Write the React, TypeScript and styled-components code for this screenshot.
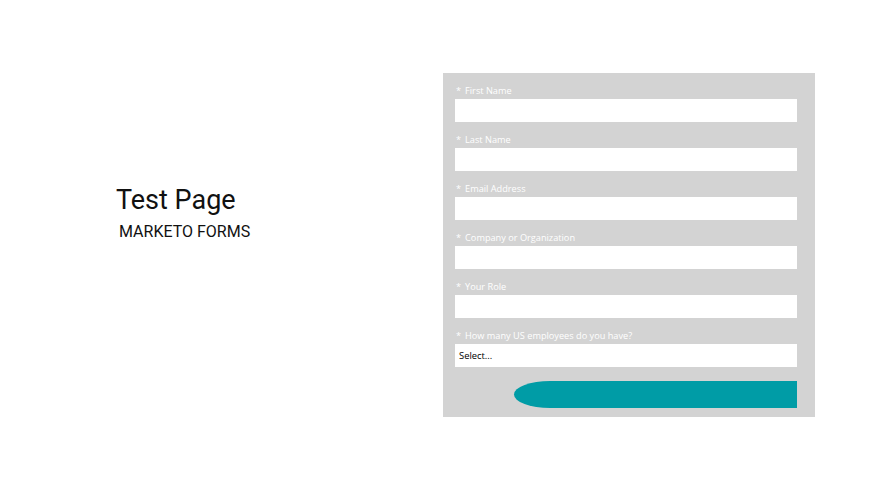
import React from "react";
import styled, { createGlobalStyle } from "styled-components";

const Global = createGlobalStyle`
  html, body { margin: 0; padding: 0; background: #ffffff; }
  body { font-family: Roboto, "Liberation Sans", Arial, sans-serif; }
  * { box-sizing: border-box; }
`;

const Page = styled.div`
  display: flex;
  align-items: center;
  height: 489px;
  width: 870px;
`;

const Intro = styled.div`
  flex: 1;
  display: flex;
  flex-direction: column;
  padding-left: 116px;
  padding-bottom: 63px;
`;

const Title = styled.h1`
  margin: 0;
  font-family: Roboto, "Liberation Sans", sans-serif;
  font-weight: 400;
  font-size: 27px;
  line-height: 30px;
  color: #111;
`;

const Subtitle = styled.div`
  margin: 8px 0 0 3px;
  font-family: Roboto, "Liberation Sans", sans-serif;
  font-size: 16px;
  line-height: 18px;
  color: #111;
`;

const Form = styled.form`
  width: 372px;
  margin-right: 55px;
  background: #d3d3d3;
  padding: 0 18px 9px 12px;
  display: flex;
  flex-direction: column;
`;

const Field = styled.div`
  display: flex;
  flex-direction: column;
`;

const Label = styled.label`
  display: block;
  padding-top: 12px;
  height: 26px;
  font-family: "Open Sans", "Liberation Sans", sans-serif;
  font-size: 9.2px;
  line-height: 12px;
  color: #ffffff;
  padding-left: 1px;
`;

const Star = styled.span`
  margin-right: 4px;
`;

const Input = styled.input`
  display: block;
  width: 342px;
  height: 23px;
  border: none;
  background: #ffffff;
  margin: 0;
  padding: 0 4px;
  outline: none;
`;

const Select = styled.div`
  width: 342px;
  height: 23px;
  background: #ffffff;
  display: flex;
  align-items: center;
  padding-left: 4px;
  font-family: "Open Sans", "Liberation Sans", sans-serif;
  font-size: 9.4px;
  color: #000;
`;

const Actions = styled.div`
  display: flex;
  justify-content: flex-end;
  margin-top: 14px;
`;

const Submit = styled.button`
  width: 283px;
  height: 27px;
  border: none;
  background: #009ca6;
  border-radius: 36px 0 0 36px / 13.5px 0 0 13.5px;
  padding: 0;
  cursor: pointer;
`;

const fields = [
  "First Name",
  "Last Name",
  "Email Address",
  "Company or Organization",
  "Your Role",
];

export default function App() {
  return (
    <>
      <Global />
      <Page>
        <Intro>
          <Title>Test Page</Title>
          <Subtitle>MARKETO FORMS</Subtitle>
        </Intro>
        <Form onSubmit={(e) => e.preventDefault()}>
          {fields.map((f) => (
            <Field key={f}>
              <Label>
                <Star>*</Star>
                {f}
              </Label>
              <Input type="text" />
            </Field>
          ))}
          <Field>
            <Label>
              <Star>*</Star>
              How many US employees do you have?
            </Label>
            <Select>Select...</Select>
          </Field>
          <Actions>
            <Submit type="submit" aria-label="Submit" />
          </Actions>
        </Form>
      </Page>
    </>
  );
}
